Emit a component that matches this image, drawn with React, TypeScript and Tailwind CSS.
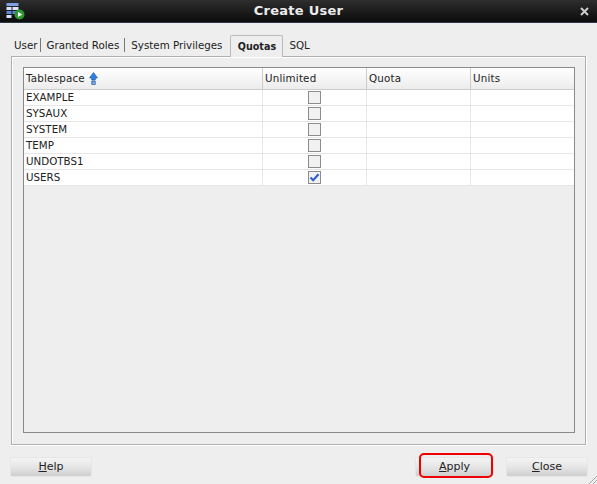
import React from 'react';

const rows = [
  { name: 'EXAMPLE', checked: false },
  { name: 'SYSAUX', checked: false },
  { name: 'SYSTEM', checked: false },
  { name: 'TEMP', checked: false },
  { name: 'UNDOTBS1', checked: false },
  { name: 'USERS', checked: true },
];

const AppIcon = () => (
  <svg width="20" height="18" viewBox="0 0 20 18" className="ml-[6px]">
    <rect x="0.5" y="1" width="12" height="3" fill="#7f9fe0" />
    <rect x="0.5" y="5" width="5" height="3" fill="#d8e2f8" />
    <rect x="6.5" y="5" width="6" height="3" fill="#d8e2f8" />
    <rect x="0.5" y="9" width="5" height="3" fill="#5f85d8" />
    <rect x="6.5" y="9" width="6" height="3" fill="#5f85d8" />
    <rect x="0.5" y="13" width="5" height="3" fill="#d8e2f8" />
    <circle cx="13.5" cy="12.5" r="5" fill="#2f9a2f" />
    <path d="M12 10 L16.2 12.5 L12 15 Z" fill="#ffffff" />
  </svg>
);

const Button = ({ label, rest, wide }: { label: string; rest: string; wide?: boolean }) => (
  <button className={`h-[20px] ${wide ? 'w-[79px]' : 'w-[82px]'} rounded-[2px] border border-[#e6e6e6] bg-gradient-to-b from-[#f4f4f4] via-[#e6e6e6] to-[#cfcfcf] text-[11px] text-[#222]`}>
    <span className="underline">{label}</span>{rest}
  </button>
);

const App: React.FC = () => {
  return (
    <div className="relative flex h-[484px] w-[597px] flex-col overflow-hidden bg-[#eeeeee] font-['DejaVu_Sans',sans-serif] text-[10.3px] text-[#222]">
      <div className="relative flex h-[23px] shrink-0 items-center border-b border-[#2a3a4a] bg-gradient-to-b from-[#2e2e2e] to-[#0c0c0c]">
        <AppIcon />
        <div className="absolute inset-x-0 text-center text-[13px] font-bold tracking-[0.25px] text-[#ececec]">Create User</div>
        <svg width="9" height="9" viewBox="0 0 9 9" className="absolute right-[8px] top-[7px]">
          <path d="M1 1 L8 8 M8 1 L1 8" stroke="#cccccc" strokeWidth="2" />
        </svg>
      </div>

      <div className="flex h-[33px] shrink-0 items-end pl-[14px]">
        <div className="flex h-[22px] items-center pt-[2px]">User</div>
        <div className="ml-[3px] mr-[5px] h-[14px] w-px self-center bg-[#777] mt-[11px]" />
        <div className="flex h-[22px] items-center pt-[2px]">Granted Roles</div>
        <div className="ml-[5px] mr-[6px] h-[14px] w-px self-center bg-[#777] mt-[11px]" />
        <div className="flex h-[22px] items-center pt-[2px]">System Privileges</div>
        <div className="relative top-px ml-[8px] flex h-[22px] w-[53px] items-center justify-center rounded-t-[2px] border border-b-0 border-[#bbbbbb] bg-[#eeeeee] pt-[2px] text-[9.6px] font-bold">Quotas</div>
        <div className="ml-[6px] flex h-[22px] items-center pt-[2px]">SQL</div>
      </div>

      <div className="ml-[11px] flex h-[389px] w-[575px] shrink-0 flex-col border border-[#b0b0b0] bg-[#eeeeee] pt-[10px] pl-[11px] shadow-[inset_1px_1px_0_#ffffff,0_1px_0_#ffffff,1px_0_0_#ffffff]">
        <div className="h-[366px] w-[552px] border border-[#8a8a8a]">
          <div className="flex h-[22px] border-b border-[#cccccc] bg-gradient-to-b from-[#ffffff] to-[#ececec]">
            <div className="flex w-[239px] items-center gap-[4px] border-r border-[#cccccc] pl-[2px] pt-[1px] tracking-[0.2px]">
              Tablespace
              <svg width="9" height="13" viewBox="0 0 9 13" className="mt-[-2px]">
                <path d="M4.5 0.5 L8.5 6 H6.3 V8 H2.7 V6 H0.5 Z" fill="#2f7fe0" stroke="#1a4fa0" strokeWidth="0.6" />
                <path d="M2.7 9 H6.3 V12.5 H2.7 Z" fill="#6fa8ec" stroke="#1a4fa0" strokeWidth="0.6" />
              </svg>
            </div>
            <div className="flex w-[104px] items-center border-r border-[#cccccc] pl-[2px] pt-[1px] tracking-[0.2px]">Unlimited</div>
            <div className="flex w-[104px] items-center border-r border-[#cccccc] pl-[2px] pt-[1px] tracking-[0.2px]">Quota</div>
            <div className="flex flex-1 items-center pl-[2px] pt-[1px] tracking-[0.2px]">Units</div>
          </div>
          {rows.map(r => (
            <div key={r.name} className="flex h-[16px] border-b border-[#e6e6e6] bg-white">
              <div className="flex w-[239px] items-center border-r border-[#e6e6e6] pl-[2px]">{r.name}</div>
              <div className="flex w-[104px] items-center justify-center border-r border-[#e6e6e6]">
                <div className="flex h-[13px] w-[13px] items-center justify-center border border-[#8c8c8c] bg-[#f1f1f1]">
                  {r.checked && (
                    <svg width="11" height="9" viewBox="0 0 11 9">
                      <path d="M1.5 4.5 L4.2 7.2 L9.5 1.2" fill="none" stroke="#2f62c8" strokeWidth="2.2" />
                    </svg>
                  )}
                </div>
              </div>
              <div className="w-[104px] border-r border-[#e6e6e6]" />
              <div className="flex-1" />
            </div>
          ))}
        </div>
      </div>

      <div className="flex flex-1 items-start pt-[12px] pl-[10px]">
        <Button label="H" rest="elp" />
        <div className="relative ml-[323px]">
          <Button label="A" rest="pply" wide />
          <div className="absolute top-[-4px] bottom-[-1px] left-[4px] right-[1px] rounded-[5px] border-2 border-[#f00000]" />
        </div>
        <div className="ml-[12px]">
          <Button label="C" rest="lose" />
        </div>
      </div>

      <svg width="9" height="9" viewBox="0 0 9 9" className="absolute bottom-0 right-0">
        <path d="M1 9 L9 1 M5 9 L9 5" stroke="#a8a8a8" strokeWidth="1" />
      </svg>
    </div>
  );
};

export default App;
